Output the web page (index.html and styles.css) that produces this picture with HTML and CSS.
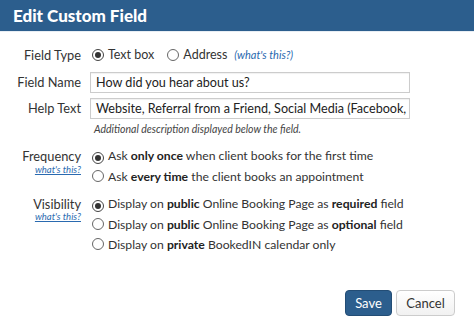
FILE: index.html
```html
<!DOCTYPE html>
<html>
<head>
<meta charset="utf-8">
<link rel="stylesheet" href="styles.css">
</head>
<body>
<div class="dialog">
  <div class="header">Edit Custom Field</div>
  <div class="form">
    <div class="row row-type">
      <div class="label">Field Type</div>
      <div class="field inline">
        <span class="opt"><span class="radio checked"></span>Text box</span>
        <span class="opt"><span class="radio"></span>Address</span>
        <a class="help-inline">(what's this?)</a>
      </div>
    </div>
    <div class="row row-name">
      <div class="label">Field Name</div>
      <div class="field"><div class="input">How did you hear about us?</div></div>
    </div>
    <div class="row row-help">
      <div class="label">Help Text</div>
      <div class="field">
        <div class="input">Website, Referral from a Friend, Social Media (Facebook,</div>
        <div class="desc">Additional description displayed below the field.</div>
      </div>
    </div>
    <div class="row row-freq">
      <div class="label">Frequency<a class="help">what's this?</a></div>
      <div class="field">
        <div class="line"><span class="radio checked"></span>Ask <b>only once</b> when client books for the first time</div>
        <div class="line"><span class="radio"></span>Ask <b>every time</b> the client books an appointment</div>
      </div>
    </div>
    <div class="row row-vis">
      <div class="label">Visibility<a class="help">what's this?</a></div>
      <div class="field">
        <div class="line"><span class="radio checked"></span>Display on <b>public</b> Online Booking Page as <b>required</b> field</div>
        <div class="line"><span class="radio"></span>Display on <b>public</b> Online Booking Page as <b>optional</b> field</div>
        <div class="line"><span class="radio"></span>Display on <b>private</b> BookedIN calendar only</div>
      </div>
    </div>
    <div class="actions">
      <button class="btn btn-primary">Save</button>
      <button class="btn btn-default">Cancel</button>
    </div>
  </div>
</div>
</body>
</html>
```
FILE: styles.css
```css
html, body {
  margin: 0;
  padding: 0;
  background: #fff;
}
body {
  width: 474px;
  height: 326px;
  overflow: hidden;
  font-family: Lato, "Open Sans", sans-serif;
  font-size: 12.2px;
  color: #333;
}
.header {
  height: 31px;
  line-height: 31px;
  background: #2c5e8d;
  color: #fff;
  font-weight: 900;
  font-size: 17px;
  padding-left: 13px;
  border-bottom: 1px solid #e8eef4;
}
.form {
  padding-top: 13px;
}
.row {
  display: grid;
  grid-template-columns: 81px 1fr;
  column-gap: 9px;
}
.label {
  text-align: right;
  font-size: 12.8px;
  line-height: 20px;
  display: flex;
  flex-direction: column;
  align-items: flex-end;
}
.field {
  min-width: 0;
  padding-right: 64px;
}
.inline {
  display: flex;
  align-items: center;
  line-height: 20px;
  font-size: 12.5px;
}
.opt {
  display: inline-flex;
  align-items: center;
  margin-right: 11px;
  white-space: nowrap;
}
.line {
  line-height: 20.5px;
  white-space: nowrap;
}
.line b {
  font-weight: 700;
  color: #222;
}
.line .radio {
  display: inline-flex;
  vertical-align: -1px;
}
.radio {
  width: 12px;
  height: 12px;
  box-sizing: border-box;
  border: 1px solid #666;
  border-radius: 50%;
  margin: 0 4px 0 2px;
  flex: none;
  background: #fff;
  display: inline-flex;
  align-items: center;
  justify-content: center;
}
.radio.checked {
  border-color: #444;
}
.radio.checked::after {
  content: "";
  width: 6px;
  height: 6px;
  border-radius: 50%;
  background: #333;
}
.help-inline {
  font-size: 11px;
  font-style: italic;
  color: #2a6ab0;
  margin-left: -4px;
}
.help {
  font-size: 9.5px;
  font-style: italic;
  color: #2a6ab0;
  text-decoration: underline;
  line-height: 12px;
  margin-top: -2px;
}
.row-name {
  margin-top: 7px;
}
.row-help {
  margin-top: 5px;
}
.row-name .label,
.row-help .label {
  line-height: 21px;
}
.input {
  height: 21px;
  box-sizing: border-box;
  border: 1px solid #ccc;
  box-shadow: inset 0 1px 1px rgba(0,0,0,0.06);
  padding: 0 5px;
  font-family: Lato, "Open Sans", sans-serif;
  font-size: 12.6px;
  line-height: 19px;
  color: #222;
  white-space: nowrap;
  overflow: hidden;
}
.desc {
  font-size: 10.5px;
  font-style: italic;
  color: #444;
  line-height: 12px;
  margin-top: 4px;
  padding-left: 4px;
}
.row-freq {
  margin-top: 11px;
}
.row-vis {
  margin-top: 7px;
}
.row-vis .help {
  margin-top: -3px;
}
.actions {
  display: flex;
  justify-content: flex-end;
  gap: 4px;
  padding-right: 19px;
  margin-top: 34px;
}
.btn {
  font-family: Lato, "Open Sans", sans-serif;
  font-size: 13px;
  height: 26px;
  border-radius: 4px;
  cursor: pointer;
  padding: 0;
}
.btn-primary {
  background: #2c5e8d;
  border: 1px solid #234d75;
  color: #fff;
  width: 47px;
}
.btn-default {
  background: linear-gradient(#fff, #f1f1f1);
  border: 1px solid #ccc;
  color: #333;
  width: 59px;
}
```
